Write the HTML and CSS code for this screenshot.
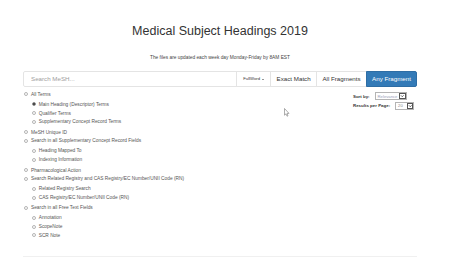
FILE: index.html
```html
<!DOCTYPE html>
<html lang="en">
  <head>
    <meta charset="UTF-8" />
    <meta name="viewport" content="width=device-width, initial-scale=1.0" />
    <title>MeSH Browser</title>
    <link rel="stylesheet" href="styles.css">
  </head>
  <body>
    <div class="page">
      <header class="masthead">
        <h1 class="title">Medical Subject Headings 2019</h1>
        <p class="notice">The files are updated each week day Monday-Friday by 8AM EST</p>
      </header>

      <div class="search">
        <div class="search-bar">
          <input class="search-input" type="text" placeholder="Search MeSH..." />
          <button class="btn btn-drop">FullWord <span class="caret"></span></button>
          <button class="btn">Exact Match</button>
          <button class="btn">All Fragments</button>
          <button class="btn btn-primary">Any Fragment</button>
        </div>

        <div class="search-body">
          <ul class="options">
            <li class="opt"><span class="radio"></span>All Terms</li>
            <li>
              <ul class="sub">
                <li class="opt"><span class="radio checked"></span>Main Heading (Descriptor) Terms</li>
                <li class="opt"><span class="radio"></span>Qualifier Terms</li>
                <li class="opt"><span class="radio"></span>Supplementary Concept Record Terms</li>
              </ul>
            </li>
            <li class="opt"><span class="radio"></span>MeSH Unique ID</li>
            <li class="opt"><span class="radio"></span>Search in all Supplementary Concept Record Fields</li>
            <li>
              <ul class="sub">
                <li class="opt"><span class="radio"></span>Heading Mapped To</li>
                <li class="opt"><span class="radio"></span>Indexing Information</li>
              </ul>
            </li>
            <li class="opt"><span class="radio"></span>Pharmacological Action</li>
            <li class="opt"><span class="radio"></span>Search Related Registry and CAS Registry/EC Number/UNII Code (RN)</li>
            <li>
              <ul class="sub">
                <li class="opt"><span class="radio"></span>Related Registry Search</li>
                <li class="opt"><span class="radio"></span>CAS Registry/EC Number/UNII Code (RN)</li>
              </ul>
            </li>
            <li class="opt"><span class="radio"></span>Search in all Free Text Fields</li>
            <li>
              <ul class="sub">
                <li class="opt"><span class="radio"></span>Annotation</li>
                <li class="opt"><span class="radio"></span>ScopeNote</li>
                <li class="opt"><span class="radio"></span>SCR Note</li>
              </ul>
            </li>
          </ul>

          <div class="sort">
            <div class="sort-row">
              <span class="sort-label">Sort by:</span>
              <span class="select select-sort">
                <span class="select-value">Relevance</span>
                <span class="select-arrow">
                  <svg viewBox="0 0 10 10" width="6" height="6"><path d="M2 3.5 L5 6.5 L8 3.5" fill="none" stroke="#222" stroke-width="1.6"/></svg>
                </span>
              </span>
            </div>
            <div class="sort-row">
              <span class="sort-label">Results per Page:</span>
              <span class="select select-count">
                <span class="select-value">20</span>
                <span class="select-arrow">
                  <svg viewBox="0 0 10 10" width="6" height="6"><path d="M2 3.5 L5 6.5 L8 3.5" fill="none" stroke="#222" stroke-width="1.6"/></svg>
                </span>
              </span>
            </div>
          </div>
        </div>
      </div>

      <hr class="rule" />
    </div>

    <!-- mouse pointer caught in the screenshot -->
    <svg class="cursor" viewBox="0 0 6 9" width="6" height="9">
      <path d="M0.5 0.5 L0.5 7.2 L2 5.8 L3 8.2 L4 7.8 L3 5.4 L5 5.4 Z" fill="#fff" stroke="#777" stroke-width="0.6"/>
    </svg>
  </body>
</html>
```

FILE: styles.css
```css
body {
  margin: 0;
  background: #fff;
  font-family: "Liberation Sans", Arial, sans-serif;
  color: #333;
}

.page {
  width: 394px;
  margin-left: 23px;
  padding-top: 24px;
}

.masthead {
  width: 394px;
  text-align: center;
}

.title {
  margin: 0;
  font-size: 12.5px;
  font-weight: normal;
  line-height: 14px;
  color: #333;
}

.notice {
  margin: 16.7px 0 0;
  font-size: 4.8px;
  line-height: 6px;
  color: #444;
}

.search-bar {
  display: flex;
  height: 16px;
  margin-top: 10.3px;
}

.search-input {
  flex: 1;
  min-width: 0;
  box-sizing: border-box;
  height: 16px;
  margin: 0;
  padding: 0 7px;
  border: 1px solid #e4e4e4;
  border-radius: 2px 0 0 2px;
  font-family: inherit;
  font-size: 6.2px;
  color: #555;
  outline: none;
}

.search-input::placeholder {
  color: #a0a0a0;
}

.btn {
  box-sizing: border-box;
  height: 16px;
  margin: 0 0 0 -1px;
  padding: 0 5.4px;
  border: 1px solid #e4e4e4;
  background: #fff;
  font-family: inherit;
  font-size: 6.2px;
  color: #333;
  white-space: nowrap;
}

.btn-drop {
  width: 35px;
  padding: 0;
  font-size: 4.2px;
}

.caret {
  display: inline-block;
  width: 0;
  height: 0;
  margin-left: 1px;
  vertical-align: middle;
  border-top: 1.8px solid #333;
  border-left: 1.6px solid transparent;
  border-right: 1.6px solid transparent;
}

.btn-primary {
  width: 51px;
  padding: 0;
  border-color: #2e6da4;
  border-radius: 0 2px 2px 0;
  background: #337ab7;
  color: #fff;
}

.search-body {
  display: flex;
  justify-content: space-between;
}

.options,
.sub {
  list-style: none;
  margin: 0;
  padding: 0;
}

.options {
  margin-top: 2.9px;
  padding-left: 1px;
}

.sub {
  margin: 1.2px 0 1.5px;
  padding-left: 7.7px;
}

.opt {
  display: flex;
  align-items: center;
  height: 8.8px;
  font-size: 4.8px;
  color: #555;
  white-space: nowrap;
}

.radio {
  box-sizing: border-box;
  width: 4px;
  height: 4px;
  margin-right: 3px;
  border: 0.7px solid #b4b4b4;
  border-radius: 50%;
  background: #fff;
  flex: none;
}

.radio.checked {
  border-color: #888;
  background: radial-gradient(circle, #333 0 50%, #fff 60%);
}

.sort {
  width: 64px;
  padding-top: 5.3px;
}

.sort-row {
  display: flex;
  align-items: center;
  height: 8px;
  margin-bottom: 1.6px;
}

.sort-label {
  font-size: 4.4px;
  font-weight: bold;
  color: #333;
  white-space: nowrap;
}

.select {
  display: flex;
  align-items: center;
  box-sizing: border-box;
  height: 8px;
  margin-left: 5px;
  border: 0.6px solid #b4b4b4;
  background: #fff;
}

.select-sort {
  width: 32px;
}

.select-count {
  width: 19px;
}

.select-value {
  flex: 1;
  padding-left: 2px;
  font-size: 4.2px;
  color: #9aa0b8;
}

.select-count .select-value {
  color: #888;
}

.select-arrow {
  display: flex;
  align-items: center;
  justify-content: center;
  box-sizing: border-box;
  width: 6.5px;
  height: 100%;
  border: 0.6px solid #555;
}

.rule {
  margin: 15px 0 0;
  border: 0;
  border-top: 1px solid #f0f0f0;
}

.cursor {
  position: absolute;
  left: 284px;
  top: 108px;
}
```
